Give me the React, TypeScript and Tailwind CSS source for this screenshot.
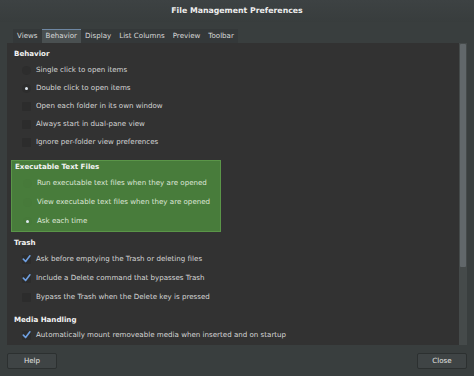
import React from "react";

type Kind = "radio" | "check";

function Mark({ kind, on, green }: { kind: Kind; on: boolean; green?: boolean }) {
  if (kind === "radio") {
    return (
      <span
        className={`flex h-[9px] w-[9px] items-center justify-center rounded-full ${
          green ? "bg-[#477a3a]" : "bg-[#2d2d2d]"
        }`}
      >
        {on && <span className="h-[3px] w-[3px] rounded-full bg-[#dfe8f0]" />}
      </span>
    );
  }
  return (
    <span className="flex h-[9px] w-[9px] items-center justify-center rounded-[1px] bg-[#2c2c2c]">
      {on && (
        <svg width="10" height="10" viewBox="0 0 10 10" className="-mt-[1px]">
          <path d="M1.5 5.2 L4 7.8 L8.8 1.5" stroke="#6f9fe0" strokeWidth="1.8" fill="none" strokeLinecap="round" strokeLinejoin="round" />
        </svg>
      )}
    </span>
  );
}

function Item({ kind, on, label, green, h = "h-[19px]" }: { kind: Kind; on?: boolean; label: string; green?: boolean; h?: string }) {
  return (
    <div className={`flex items-center ${h}`}>
      <div className="flex w-[22px] justify-center pl-[2px]">
        <Mark kind={kind} on={!!on} green={green} />
      </div>
      <span className={green ? "text-[#dfe7d8]" : "text-[#d6d6d6]"}>{label}</span>
    </div>
  );
}

function Heading({ children, h = "h-[14px]" }: { children: React.ReactNode; h?: string }) {
  return <div className={`flex items-center font-bold text-[#f2f2f2] ${h}`}>{children}</div>;
}

export default function App() {
  const tabs = ["Views", "Behavior", "Display", "List Columns", "Preview", "Toolbar"];
  return (
    <div className="flex h-[376px] w-[474px] flex-col bg-[#393e3e] font-['DejaVu_Sans',sans-serif] text-[7.1px]">
      <div className="flex h-[22px] items-center justify-center bg-gradient-to-b from-[#3d4243] to-[#383d3d] text-[7.8px] font-bold text-[#eeeeee]">
        File Management Preferences
      </div>
      <div className="flex h-[21px] items-end pl-[13px]">
        <div className="flex h-[14px] items-stretch bg-[#343839]">
          {tabs.map((t) => (
            <div
              key={t}
              className={`flex items-center px-[4px] text-[#dadada] ${
                t === "Behavior" ? "border-t border-[#6e87a3] bg-[#4a5051]" : ""
              }`}
            >
              {t}
            </div>
          ))}
        </div>
      </div>
      <div className="mx-[7px] flex h-[302px] bg-[#323232]">
        <div className="flex flex-1 flex-col pl-[7px] pt-[4px]">
          <Heading>Behavior</Heading>
          <div className="flex flex-col">
            <Item kind="radio" h="h-[18px]" label="Single click to open items" />
            <Item kind="radio" h="h-[18px]" on label="Double click to open items" />
            <Item kind="check" h="h-[18px]" label="Open each folder in its own window" />
            <Item kind="check" h="h-[18px]" label="Always start in dual-pane view" />
            <Item kind="check" h="h-[18px]" label="Ignore per-folder view preferences" />
          </div>
          <div className="-ml-[3px] mt-[9px] w-[210px] border border-[#5a9548] bg-[#487c3b] pl-[3px]">
            <Heading h="h-[13px]">Executable Text Files</Heading>
            <Item kind="radio" green label="Run executable text files when they are opened" />
            <Item kind="radio" green label="View executable text files when they are opened" />
            <Item kind="radio" green on label="Ask each time" />
          </div>
          <div className="mt-[4px]">
            <Heading>Trash</Heading>
            <Item kind="check" on label="Ask before emptying the Trash or deleting files" />
            <Item kind="check" on label="Include a Delete command that bypasses Trash" />
            <Item kind="check" label="Bypass the Trash when the Delete key is pressed" />
          </div>
          <div className="mt-[6px]">
            <Heading>Media Handling</Heading>
            <Item kind="check" h="h-[17px]" on label="Automatically mount removeable media when inserted and on startup" />
          </div>
        </div>
        <div className="flex w-[8px] flex-col bg-[#454a4a] py-[1px]">
          <div className="mx-[1px] h-[223px] rounded-[1px] bg-[#61676a]" />
        </div>
      </div>
      <div className="flex flex-1 items-center justify-between px-[7px] pt-[1px]">
        <button className="h-[16px] w-[50px] rounded-[2px] border border-[#2c3030] bg-[#3f4445] text-[#e4e4e4]">Help</button>
        <button className="h-[16px] w-[50px] rounded-[2px] border border-[#2c3030] bg-[#3f4445] text-[#e4e4e4]">Close</button>
      </div>
    </div>
  );
}
